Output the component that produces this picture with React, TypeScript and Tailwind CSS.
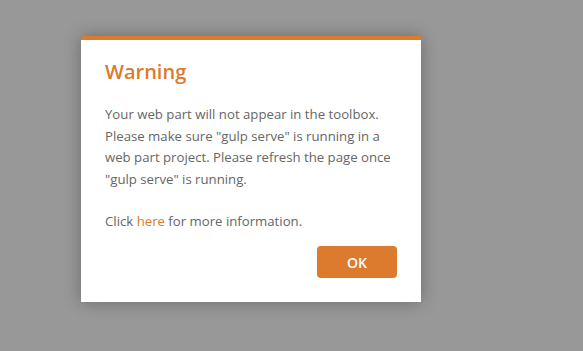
export default function App() {
  return (
    <div className="h-[351px] w-[583px] bg-[#989898] font-['Open_Sans',sans-serif]">
      <div className="pl-[81px] pt-[36px]">
        <div className="w-[340px] h-[266px] bg-white border-t-4 border-[#dc7a2e] shadow-[0_0_16px_rgba(0,0,0,0.3)] px-6 pt-[18px] flex flex-col">
          <h1 className="text-[20px] leading-[28px] font-semibold text-[#dc7a2e]">Warning</h1>
          <p className="mt-[18px] text-[13.2px] leading-[21.7px] text-[#666666]">
            Your web part will not appear in the toolbox. Please make sure "gulp serve" is running in a web part
            project. Please refresh the page once "gulp serve" is running.
          </p>
          <p className="mt-[20.5px] text-[13.2px] leading-[21.7px] text-[#666666]">
            Click <a className="text-[#dc7a2e]">here</a> for more information.
          </p>
          <div className="mt-[13px] flex justify-end">
            <button className="w-20 h-8 rounded-sm bg-[#dc7a2e] text-white text-[14px] font-semibold">OK</button>
          </div>
        </div>
      </div>
    </div>
  );
}
